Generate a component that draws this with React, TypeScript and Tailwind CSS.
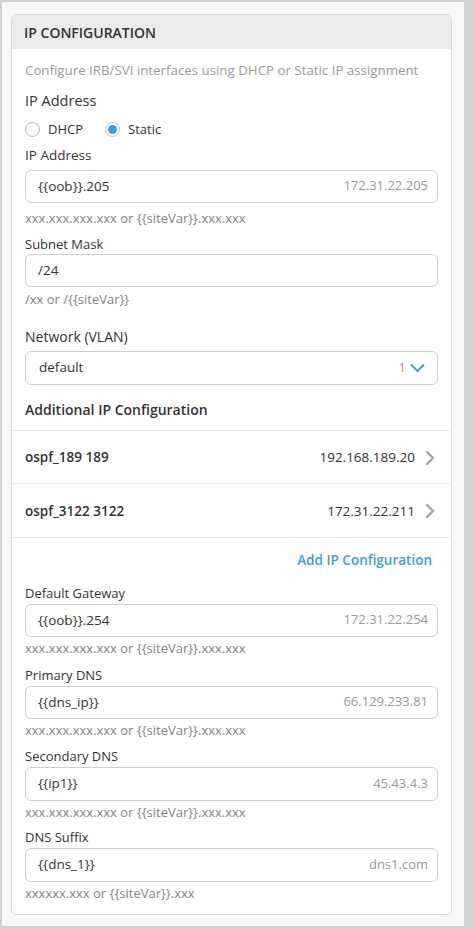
import React, { useState } from 'react';

type Field = { label: string; value: string; hint: string; help: string; tall?: boolean; gap: string };

const dnsFields: Field[] = [
  { label: 'Default Gateway', value: '{{oob}}.254', hint: '172.31.22.254', help: 'xxx.xxx.xxx.xxx or {{siteVar}}.xxx.xxx', gap: '' },
  { label: 'Primary DNS', value: '{{dns_ip}}', hint: '66.129.233.81', help: 'xxx.xxx.xxx.xxx or {{siteVar}}.xxx.xxx', gap: 'mt-[9px]' },
  { label: 'Secondary DNS', value: '{{ip1}}', hint: '45.43.4.3', help: 'xxx.xxx.xxx.xxx or {{siteVar}}.xxx.xxx', tall: true, gap: 'mt-[8px]' },
  { label: 'DNS Suffix', value: '{{dns_1}}', hint: 'dns1.com', help: 'xxxxxx.xxx or {{siteVar}}.xxx', tall: true, gap: 'mt-[7px]' },
];

const extraIps = [
  { name: 'ospf_189 189', ip: '192.168.189.20' },
  { name: 'ospf_3122 3122', ip: '172.31.22.211' },
];

const ChevronRight = () => (
  <svg width="10" height="16" viewBox="0 0 10 16" fill="none">
    <path d="M2 2l6 6-6 6" stroke="#a3a3a3" strokeWidth="2.4" strokeLinecap="round" strokeLinejoin="round" />
  </svg>
);

const ChevronDown = () => (
  <svg width="15" height="10" viewBox="0 0 15 10" fill="none">
    <path d="M1.5 2l6 6 6-6" stroke="#3b9ce6" strokeWidth="1.8" strokeLinecap="round" strokeLinejoin="round" />
  </svg>
);

const TextBox = ({ value, hint, tall }: { value: string; hint?: string; tall?: boolean }) => (
  <div
    className={`flex items-center justify-between rounded-[6px] border border-[#cfcfcf] bg-white pl-[12px] pr-[9px] text-[13.5px] ${
      tall ? 'h-[34px]' : 'h-[33px]'
    }`}
  >
    <span className="text-[#333]">{value}</span>
    {hint && <span className="text-[13px] text-[#9a9a9a]">{hint}</span>}
  </div>
);

const Radio = ({ checked, label, onClick }: { checked: boolean; label: string; onClick: () => void }) => (
  <button type="button" onClick={onClick} className="flex items-center gap-[8px] text-[13px] text-[#333]">
    <span
      className={`flex h-[15px] w-[15px] items-center justify-center rounded-full border bg-white ${
        checked ? 'border-[#9bc9ee]' : 'border-[#b5b5b5]'
      }`}
    >
      {checked && <span className="h-[9px] w-[9px] rounded-full bg-[#3d9be9]" />}
    </span>
    {label}
  </button>
);

const Help = ({ children, className = '' }: { children: React.ReactNode; className?: string }) => (
  <p className={`text-[13px] leading-[18px] text-[#838383] ${className}`}>{children}</p>
);

const App: React.FC = () => {
  const [mode, setMode] = useState<'dhcp' | 'static'>('static');

  return (
    <div
      className="min-h-[929px] w-[474px] bg-[#d2d2d2] pl-[2px] pt-[2px]"
      style={{ fontFamily: '"Open Sans", "Noto Sans", sans-serif' }}
    >
      <div className="h-[924px] w-[462px] bg-[#f7f7f7] pl-[9px] pt-[12px]">
        <div className="w-[441px] overflow-hidden rounded-[6px] border border-[#d8d8d8] bg-white">
          <div className="flex h-[34px] items-center bg-[#ebebeb] px-[12px]">
            <h2 className="text-[14px] font-semibold text-[#333]">IP CONFIGURATION</h2>
          </div>

          <div className="px-[13px] pt-[12px]">
            <p className="text-[13.3px] leading-[18px] text-[#9a9a9a]">
              Configure IRB/SVI interfaces using DHCP or Static IP assignment
            </p>
            <h3 className="mt-[12px] text-[14.5px] leading-[20px] text-[#333]">IP Address</h3>
            <div className="mt-[9px] flex items-center gap-[22px]">
              <Radio checked={mode === 'dhcp'} label="DHCP" onClick={() => setMode('dhcp')} />
              <Radio checked={mode === 'static'} label="Static" onClick={() => setMode('static')} />
            </div>

            <label className="mt-[5px] block text-[13.5px] leading-[20px] text-[#333]">IP Address</label>
            <div className="mt-[5px]">
              <TextBox value="{{oob}}.205" hint="172.31.22.205" />
            </div>
            <Help className="mt-[6px]">xxx.xxx.xxx.xxx or {'{{siteVar}}'}.xxx.xxx</Help>

            <label className="mt-[8px] block text-[13px] leading-[18px] text-[#333]">Subnet Mask</label>
            <div className="mt-[1px]">
              <TextBox value="/24" />
            </div>
            <Help className="mt-[3px]">/xx or /{'{{siteVar}}'}</Help>

            <label className="mt-[19px] block text-[14px] leading-[20px] text-[#333]">Network (VLAN)</label>
            <div className="mt-[4px] flex h-[34px] items-center justify-between rounded-[6px] border border-[#cfcfcf] bg-white pl-[13px] pr-[12px] text-[13.5px]">
              <span className="text-[#333]">default</span>
              <span className="flex items-center gap-[4px] text-[#9a9a9a]">
                1
                <ChevronDown />
              </span>
            </div>

            <h3 className="mt-[15px] text-[14px] font-semibold leading-[20px] text-[#333]">Additional IP Configuration</h3>
          </div>

          <div className="mt-[10px]">
            {extraIps.map((row, i) => (
              <div
                key={row.name}
                className={`flex items-center justify-between border-t border-[#ebebeb] pl-[13px] pr-[16px] pt-[2px] ${
                  i === 0 ? 'h-[53px]' : 'h-[54px]'
                }`}
              >
                <span className="text-[13.5px] font-semibold text-[#333]">{row.name}</span>
                <span className="flex items-center gap-[10px] text-[13.5px] text-[#333]">
                  {row.ip}
                  <ChevronRight />
                </span>
              </div>
            ))}
            <div className="flex h-[45px] items-center justify-end border-t border-[#ebebeb] pr-[19px] pt-[1px]">
              <button type="button" className="text-[13.5px] font-semibold text-[#3d9ee2]">
                Add IP Configuration
              </button>
            </div>
          </div>

          <div className="px-[13px] pb-[12px] pt-[2px]">
            {dnsFields.map((f) => (
              <div key={f.label} className={f.gap}>
                <label className="block text-[13px] leading-[18px] text-[#333]">{f.label}</label>
                <div className="mt-[2px]">
                  <TextBox value={f.value} hint={f.hint} tall={f.tall} />
                </div>
                <Help className="mt-[2px]">{f.help}</Help>
              </div>
            ))}
          </div>
        </div>
      </div>
    </div>
  );
};

export default App;
